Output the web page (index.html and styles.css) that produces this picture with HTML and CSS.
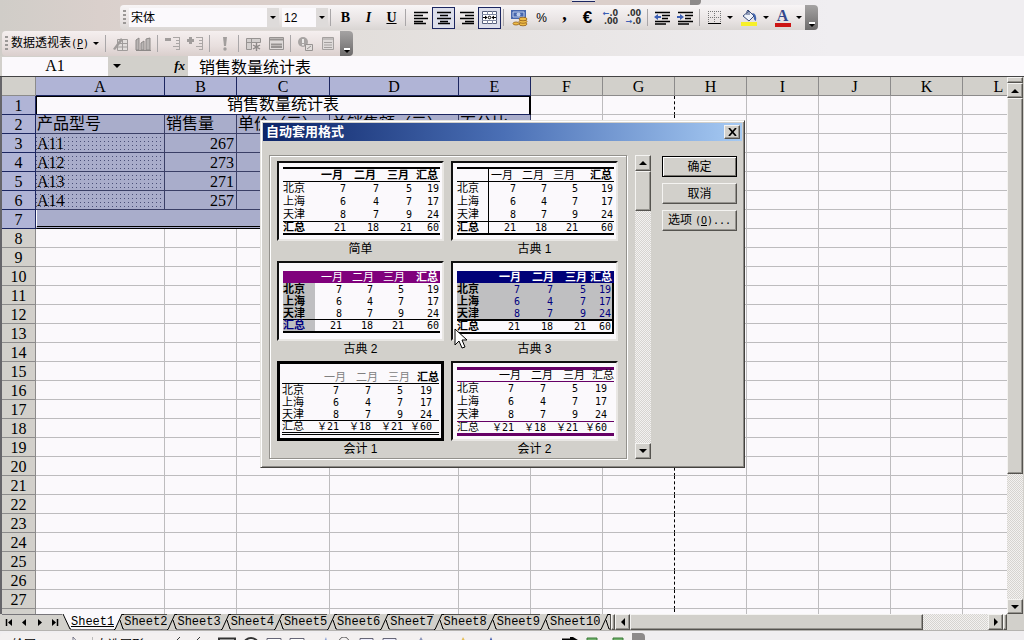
FILE: index.html
```html
<!doctype html>
<html lang="zh-CN">
<head>
  <meta charset="UTF-8">
  <meta name="viewport" content="width=device-width, initial-scale=1.0">
  <title>销售数量统计表</title>
  <link rel="stylesheet" href="styles.css">
</head>
<body>
  <header class="toolbars">
    <div class="bar-stub"><i></i></div>
    <div class="bar format-bar">
      <span class="grip"></span>
      <span class="combo font-combo"><select aria-label="字体"><option>宋体</option></select></span>
      <span class="combo size-combo"><select aria-label="字号"><option>12</option></select></span>
      <span class="sep"></span>
      <button class="tool serif" aria-label="加粗"><b>B</b></button>
      <button class="tool serif" aria-label="倾斜"><i>I</i></button>
      <button class="tool serif" aria-label="下划线"><u>U</u></button>
      <span class="sep"></span>
      <button class="tool" aria-label="左对齐"><svg width="16" height="14"><path d="M1 1.500h14M1 4.500h9M1 7.500h14M1 10.500h9M1 12.500h12" stroke="#000" stroke-width="1.400"/></svg></button>
      <button class="tool pressed" aria-label="居中"><svg width="16" height="14"><path d="M1 1.500h14M4 4.500h8M1 7.500h14M4 10.500h8M2 12.500h12" stroke="#000" stroke-width="1.400"/></svg></button>
      <button class="tool" aria-label="右对齐"><svg width="16" height="14"><path d="M1 1.500h14M6 4.500h9M1 7.500h14M6 10.500h9M3 12.500h12" stroke="#000" stroke-width="1.400"/></svg></button>
      <button class="tool pressed" aria-label="合并及居中"><svg width="17" height="15"><path d="M1.500 1.500h14v12h-14z" fill="#fff" stroke="#56607c"/><path d="M1 4.500h15M1 10.500h15M6.500 1v3M11.500 1v3M6.500 11v3M11.500 11v3" stroke="#8088a0"/><path d="M2 7.500h3M15 7.500h-3" stroke="#000"/><path d="M4 5.500l2.500 2-2.500 2zM13 5.500l-2.500 2 2.500 2z"/><circle cx="8.500" cy="7.500" r="1.300" fill="none" stroke="#000"/></svg></button>
      <span class="sep"></span>
      <button class="tool" aria-label="货币样式"><svg width="18" height="18"><rect x="1" y="1" width="15" height="9" fill="#4767ae"/><path d="M3 3h11v5H3z" fill="none" stroke="#bccbea"/><circle cx="8.500" cy="5.500" r="2" fill="#bccbea"/><g fill="#efbc46" stroke="#92601c" stroke-width=".8"><ellipse cx="13" cy="15" rx="4" ry="1.800"/><ellipse cx="13" cy="12.500" rx="4" ry="1.800"/><ellipse cx="13" cy="10" rx="4" ry="1.800"/><ellipse cx="6" cy="14.500" rx="3" ry="1.500"/></g></svg></button>
      <button class="tool" aria-label="百分比样式">%</button>
      <button class="tool serif" aria-label="千位分隔样式"><b class="comma">,</b></button>
      <button class="tool euro" aria-label="欧元">€</button>
      <button class="tool decimal" aria-label="增加小数位数"><span><em>←</em>.0<br>.00</span></button>
      <button class="tool decimal" aria-label="减少小数位数"><span>.00<br><em>→</em>.0</span></button>
      <span class="sep"></span>
      <button class="tool" aria-label="减少缩进量"><svg width="17" height="14"><path d="M1 1.500h15M8 4.500h8M8 7.500h6M1 10.500h15M1 13h11" stroke="#000" stroke-width="1.500"/><path d="M0 6l4-3v2h3v2H4v2z" fill="#3c5fb4"/></svg></button>
      <button class="tool" aria-label="增加缩进量"><svg width="17" height="14"><path d="M1 1.500h15M8 4.500h8M8 7.500h6M1 10.500h15M1 13h11" stroke="#000" stroke-width="1.500"/><path d="M7 6L3 3v2H0v2h3v2z" fill="#3c5fb4"/></svg></button>
      <span class="sep"></span>
      <button class="tool split" aria-label="边框"><svg width="15" height="15"><path d="M1.500 1v12M7.500 1v12M13.500 1v12M1 1.500h13M1 7.500h13" stroke="#777" stroke-dasharray="1 1"/><path d="M1 13.500h13" stroke="#000"/></svg><i class="down"></i></button>
      <button class="tool split" aria-label="填充颜色"><svg width="18" height="18"><rect x="1" y="13" width="16" height="4" fill="#f7f02a"/><path d="M3 7l6-5 5 5-5 5z" fill="#eef2fa" stroke="#3a4d7c"/><path d="M7 6V2q1-2 2 0v4" fill="none" stroke="#3a4d7c"/><path d="M12 4q5 0 4 8-3-1-2-5z" fill="#4165b0"/></svg><i class="down"></i></button>
      <button class="tool split font-color" aria-label="字体颜色"><span>A</span><i class="down"></i></button>
      <span class="bar-end"><i></i></span>
    </div>
    <div class="bar pivot-bar">
      <span class="grip"></span>
      <button class="pivot-menu"><span>数据透视表<span class="key">(<u>P</u>)</span></span><i class="down"></i></button>
      <span class="sep"></span>
      <button class="tool" aria-label="设置报告格式"><svg width="17" height="16"><path d="M5.500 3.500h10v11h-10zM5 7.500h11M5 11h11M10.500 4v10" fill="#e2dedc" stroke="#a09c9b"/><path d="M1 13L9 2l2 2-8 10z" fill="#a09c9b"/></svg></button>
      <button class="tool" aria-label="图表向导"><svg width="17" height="16"><path d="M1 4l3-2v12H1zM6 7l3-2v9H6zM11 3l4-1v12h-4z" fill="#b9b5b4" stroke="#8d8988"/><path d="M1 14.500h15" stroke="#8d8988"/></svg></button>
      <span class="sep"></span>
      <button class="tool" aria-label="隐藏明细数据"><svg width="17" height="16"><path d="M1 3.500h6" stroke="#a19d9c" stroke-width="3"/><path d="M9 1.500h7M12 4.500h4M12 7.500h4M9 10.500h7M12 13.500h4M15.500 1v13" stroke="#aaa6a5"/></svg></button>
      <button class="tool" aria-label="显示明细数据"><svg width="17" height="16"><path d="M0 4.500h7M3.500 1v7" stroke="#a19d9c" stroke-width="3"/><path d="M9 1.500h7M12 4.500h4M12 7.500h4M9 10.500h7M12 13.500h4M15.500 1v13" stroke="#aaa6a5"/></svg></button>
      <span class="sep"></span>
      <button class="tool" aria-label="刷新数据"><svg width="8" height="16"><path d="M2 1h4L5 10H3z" fill="#a29e9d"/><circle cx="4" cy="13" r="1.700" fill="#a29e9d"/></svg></button>
      <span class="sep"></span>
      <button class="tool" aria-label="包含隐藏项"><svg width="17" height="16"><path d="M1.500 2.500h14v4h-9v7h-5zM6.500 2v5M1 6.500h6" fill="#d3cfce" stroke="#979392"/><path d="M11.500 7v8M8 9l7 4M15 9l-7 4" stroke="#8d8988" stroke-width="1.400"/></svg></button>
      <button class="tool" aria-label="始终显示项"><svg width="17" height="16"><path d="M1.500 1.500h14v12h-14z" fill="#dedad9" stroke="#979392"/><path d="M1 3.500h15M3 8.500h11M3 11h11" stroke="#979392" stroke-width="2"/></svg></button>
      <span class="sep"></span>
      <button class="tool" aria-label="字段设置"><svg width="17" height="16"><circle cx="6" cy="6" r="5" fill="#a8a4a3"/><path d="M6 3v4M6 8v1.500" stroke="#fff" stroke-width="1.500"/><path d="M8.500 8.500h7v6h-7z" fill="#e2dedc" stroke="#979392"/><path d="M10 13l4-3" stroke="#979392"/></svg></button>
      <button class="tool" aria-label="显示字段列表"><svg width="15" height="15"><path d="M1.500 1.500h11v12h-11z" fill="#dedad9" stroke="#a4a09f"/><path d="M1 3h12M3 6.500h8M3 9h8M3 11.500h8" stroke="#a4a09f"/></svg></button>
      <span class="bar-end"><i></i></span>
    </div>
  </header>

  <div class="formula-bar">
    <input class="name-box" value="A1" aria-label="名称框">
    <button class="name-drop" aria-label="名称列表"><i class="down"></i></button>
    <span class="fx">fx</span>
    <input class="formula" value="销售数量统计表" aria-label="编辑栏">
  </div>

  <main class="workspace">
    <div class="sheet-view">
      <table class="sheet">
        <colgroup>
          <col class="c-head"><col class="c-wide"><col class="c"><col class="c-mid"><col class="c-wide"><col class="c">
          <col class="c"><col class="c"><col class="c"><col class="c"><col class="c"><col class="c"><col class="c">
        </colgroup>
        <thead>
          <tr>
            <th class="corner"></th><th class="on">A</th><th class="on">B</th><th class="on">C</th><th class="on">D</th><th class="on">E</th>
            <th>F</th><th>G</th><th>H</th><th>I</th><th>J</th><th>K</th><th>L</th>
          </tr>
        </thead>
        <tbody id="rows">
          <tr><th class="on">1</th><td class="title" colspan="5">销售数量统计表</td></tr>
          <tr><th class="on">2</th><td class="sel">产品型号</td><td class="sel">销售量</td><td class="sel">单价（元）</td><td class="sel">总销售额（元）</td><td class="sel">百分比</td></tr>
          <tr><th class="on">3</th><td class="sel dots">A11</td><td class="sel num">267</td><td class="sel"></td><td class="sel"></td><td class="sel"></td></tr>
          <tr><th class="on">4</th><td class="sel dots">A12</td><td class="sel num">273</td><td class="sel"></td><td class="sel"></td><td class="sel"></td></tr>
          <tr><th class="on">5</th><td class="sel dots">A13</td><td class="sel num">271</td><td class="sel"></td><td class="sel"></td><td class="sel"></td></tr>
          <tr><th class="on">6</th><td class="sel dots">A14</td><td class="sel num">257</td><td class="sel"></td><td class="sel"></td><td class="sel"></td></tr>
          <tr><th class="on">7</th><td class="sel last" colspan="5"></td></tr>
        </tbody>
      </table>
    </div>
    <div class="vscroll">
      <span class="splitter"></span>
      <button class="sb" aria-label="向上滚动"><i class="up"></i></button>
      <span class="thumb"></span>
      <span class="track"></span>
      <button class="sb" aria-label="向下滚动"><i class="down"></i></button>
    </div>
  </main>

  <nav class="sheet-tabs">
    <div class="tab-nav">
      <button aria-label="第一张"><svg width="9" height="9"><path d="M1.500 1v7" stroke="#000" stroke-width="1.500"/><path d="M7 1v7L3 4.500z"/></svg></button>
      <button aria-label="上一张"><svg width="9" height="9"><path d="M6 1v7L2 4.500z"/></svg></button>
      <button aria-label="下一张"><svg width="9" height="9"><path d="M3 1v7l4-3.500z"/></svg></button>
      <button aria-label="最后一张"><svg width="9" height="9"><path d="M2 1v7l4-3.500z"/><path d="M7.500 1v7" stroke="#000" stroke-width="1.500"/></svg></button>
    </div>
    <div class="tabs" id="tabs"></div>
    <div class="hscroll">
      <span class="splitter"></span>
      <button class="sb" aria-label="向左滚动"><i class="left"></i></button>
      <span class="thumb"></span>
      <span class="track"></span>
      <button class="sb" aria-label="向右滚动"><i class="right"></i></button>
      <span class="splitter"></span>
    </div>
    <span class="size-corner"></span>
  </nav>

  <footer class="draw-bar">
    <div class="draw-tools">
      <button class="draw-label">绘图</button>
      <svg width="30" height="16"><path d="M7 0l8 9H7z" fill="#fff" stroke="#778"/><path d="M26.500 0v16" stroke="#bbb"/></svg>
      <button class="draw-label">自选图形</button>
      <svg width="480" height="16">
        <path d="M26 10L36 0M46 10L56 0" stroke="#333"/>
        <path d="M75 1.500h16v10H75z" fill="#fff" stroke="#333" stroke-width="2"/>
        <ellipse cx="107" cy="7" rx="7" ry="6" fill="#fff" stroke="#333" stroke-width="2"/>
        <path d="M123 1.500h14v10h-14zM146 1.500h14v10h-14z" fill="#fff" stroke="#667"/>
        <path d="M177 12l5-12 3 12z" fill="#8aa0d4"/><circle cx="200" cy="5" r="5" fill="none" stroke="#555"/>
        <path d="M216 1.500h13v10h-13zM239 1.500h13v10h-13z" fill="#eef" stroke="#667"/>
        <path d="M272 9l5-9 5 9z" fill="#8a93b8"/><path d="M315 9l4-9 5 9z" fill="#e5bd56"/><path d="M343 10l4-10 4 10z" fill="#4760b0"/>
        <path d="M418 2.500h11M427 0l5 3-5 3z" stroke="#000" stroke-width="2"/>
        <path d="M443 1h10v9h-10zM469 1h10v9h-10z" fill="#72b26c" stroke="#3a7a38"/>
      </svg>
      <span class="bar-end"></span>
    </div>
  </footer>

  <section class="dialog" role="dialog" aria-labelledby="dlg-title">
    <div class="dialog-title">
      <h1 id="dlg-title">自动套用格式</h1>
      <button class="close" aria-label="关闭"><svg width="9" height="8"><path d="M1 0l7 8M8 0L1 8" stroke="#000" stroke-width="1.700"/></svg></button>
    </div>
    <div class="dialog-body">
      <div class="formats" id="formats" role="listbox" aria-label="格式"></div>
      <div class="vscroll dlg-scroll">
        <button class="sb" aria-label="向上滚动"><i class="up"></i></button>
        <span class="thumb"></span>
        <span class="track"></span>
        <button class="sb" aria-label="向下滚动"><i class="down"></i></button>
      </div>
      <div class="actions">
        <button class="btn default">确定</button>
        <button class="btn">取消</button>
        <button class="btn">选项<span class="key">(<u>O</u>)...</span></button>
      </div>
    </div>
    <svg class="pointer" width="14" height="22"><path d="M1 1v16l4-4 3 7 3-1-3-7h5z" fill="#fff" stroke="#000"/></svg>
  </section>

  <script src="script.js"></script>
</body>
</html>
```
FILE: styles.css
```css
:root {
  --face: #d2d0cb;
  --paper: #fbf9fc;
  --line: #bdbcbe;
  --head-on: #b0b4d6;
  --cell-on: #a9adcb;
  --navy: #1c2660;
  --ui: "Liberation Sans", "Noto Sans CJK SC", sans-serif;
  --song: "Liberation Serif", "Noto Sans CJK SC", serif;
}

* {
  margin: 0;
  padding: 0;
  box-sizing: border-box;
}

body {
  position: relative;
  display: flex;
  flex-direction: column;
  height: 100vh;
  overflow: hidden;
  background: #f0eef1;
  color: #000;
  font: 12px/16px var(--ui);
}

button, select, input {
  font: inherit;
  color: inherit;
  background: none;
  border: none;
  border-radius: 0;
}

svg {
  fill: #000;
  flex: none;
}

/* arrows */
.down, .up, .left, .right {
  flex: none;
  width: 0;
  height: 0;
  border: 4px solid transparent;
}
.down { border-top-color: #000; border-bottom-width: 0; }
.up { border-bottom-color: #000; border-top-width: 0; }
.left { border-right-color: #000; border-left-width: 0; }
.right { border-left-color: #000; border-right-width: 0; }
.split .down, .pivot-menu .down { border-width: 3px 3px 0; }

.key { font: 10px/16px "DejaVu Sans Mono", monospace; }

/* toolbars */
.toolbars {
  flex: none;
  background: linear-gradient(90deg, #d0cdc8 0, #dad0cc 100px, #e2dedb 350px, #f0eef1 830px);
}

.bar-stub {
  height: 5px;
  margin-left: 120px;
  width: 581px;
  background: #dbcfcb;
  border-right: 11px solid #8d8a8a;
  border-radius: 0 0 4px 0;
}
.bar-stub i {
  display: block;
  width: 23px;
  height: 2px;
  margin-left: 452px;
  background: #e6e6ee;
  border-bottom: 1px solid var(--navy);
}

.bar {
  display: flex;
  align-items: center;
  width: fit-content;
  background: linear-gradient(#f8f5f6, #e9e4e4 60%, #d9d5d3);
  border-radius: 4px;
}
.format-bar {
  height: 25px;
  margin-left: 120px;
}
.pivot-bar {
  height: 25px;
  margin: 1px 0 0 2px;
  background: linear-gradient(#f5efef, #e8dfde 60%, #dacfcd);
}

.grip {
  width: 3px;
  height: 16px;
  margin: 0 3px;
  background: repeating-linear-gradient(#9b9897 0 2px, transparent 2px 4px);
}

.sep {
  width: 1px;
  height: 17px;
  margin: 0 3px 0 2px;
  background: #a9a6a8;
}

.combo {
  display: flex;
  position: relative;
  height: 19px;
  background: var(--paper);
}
.combo select {
  appearance: none;
  width: 100%;
  padding-left: 2px;
  background: linear-gradient(#dedbda, #dedbda) right / 12px 100% no-repeat;
}
.combo::after {
  content: "";
  position: absolute;
  right: 3px;
  top: 8px;
  border: 3px solid transparent;
  border-top-color: #000;
  border-bottom-width: 0;
}
.font-combo { width: 150px; margin-right: 3px; }
.size-combo { width: 46px; }

.tool {
  display: flex;
  align-items: center;
  justify-content: center;
  width: 23px;
  height: 22px;
}
.tool.pressed {
  background: #dcdeea;
  border: 1px solid var(--navy);
}
.tool.split { width: 34px; gap: 5px; }
.serif { font: 14px/16px "Liberation Serif", serif; font-weight: bold; }
.comma { font-size: 18px; line-height: 12px; height: 20px; }
.euro { font-size: 17px; font-weight: bold; }
.decimal { font: bold 8px/8px "DejaVu Sans", sans-serif; text-align: right; color: #333; }
.decimal em { color: #3c5fb4; font-style: normal; }
.font-color span {
  height: 18px;
  width: 16px;
  border-bottom: 4px solid #cc1414;
  color: #34478c;
  font: bold 16px/14px "Liberation Serif", serif;
}

.bar-end {
  display: flex;
  align-items: flex-end;
  justify-content: center;
  width: 13px;
  align-self: stretch;
  background: linear-gradient(#a5a3a3, #6d6b6b);
  border-radius: 0 4px 4px 0;
}
.bar-end i {
  width: 6px;
  height: 3px;
  margin-bottom: 3px;
  border: 3px solid transparent;
  border-top-color: #000;
  border-bottom: 0;
  box-shadow: 0 -2px #fff;
}

.pivot-menu {
  display: flex;
  align-items: center;
  gap: 4px;
  width: 92px;
  white-space: nowrap;
}

/* formula bar */
.formula-bar {
  flex: none;
  display: flex;
  align-items: center;
  height: 20px;
  padding-left: 2px;
  background: var(--face);
  font: 16px/18px var(--song);
}
.name-box {
  width: 106px;
  height: 19px;
  background: var(--paper);
  text-align: center;
}
.name-drop { width: 17px; display: flex; justify-content: center; }
.fx {
  flex: none;
  width: 63px;
  padding-right: 3px;
  text-align: right;
  font: italic bold 13px/18px "Liberation Serif", serif;
}
.formula {
  flex: 1;
  min-width: 0;
  height: 20px;
  padding-left: 11px;
  background: var(--paper);
}

/* sheet */
.workspace {
  flex: 1;
  min-height: 0;
  display: flex;
  background: var(--face);
  border-top: 1px solid #444;
}
.sheet-view {
  flex: 1;
  min-width: 0;
  overflow: hidden;
  border-left: 2px solid #66656a;
  background: var(--paper);
}
.sheet {
  table-layout: fixed;
  width: 1000px;
  border-spacing: 0;
  font: 16px/18px var(--song);
}
.c-head { width: 34px; }
.c-wide { width: 129px; }
.c-mid { width: 93px; }
.c { width: 72px; }

.sheet th, .sheet td {
  height: 19px;
  border-right: 1px solid var(--line);
  border-bottom: 1px solid var(--line);
  white-space: nowrap;
  overflow: hidden;
}
.sheet th {
  background: var(--face);
  border-color: #8c8b8b;
  font-weight: normal;
}
.sheet th, .sheet td.dots, .sheet td.num {
  padding-top: 2px;
  line-height: 16px;
}
.sheet th.on {
  background: var(--head-on);
  border-color: var(--navy);
}
.sheet td { padding-left: 1px; }
.sheet td.title {
  text-align: center;
  border-right: 2px solid #000;
  border-bottom-color: var(--navy);
  box-shadow: inset 1px 1px #000;
}
.sheet td.sel {
  background-color: var(--cell-on);
  border-color: #3a3f66;
}
.sheet td.dots {
  background-image:
    repeating-linear-gradient(var(--cell-on) 0 3px, transparent 3px 4px),
    repeating-linear-gradient(90deg, #4a4f78 0 1px, var(--cell-on) 1px 4px);
}
.sheet td.num { padding-right: 2px; text-align: right; }
.sheet td.last {
  border-bottom: 3px double #000;
  border-left: 1px solid #fff;
}
.sheet td.page-break { border-right: 1px dashed #000; }

/* scroll bars */
.vscroll {
  display: flex;
  flex-direction: column;
  width: 17px;
  padding-right: 1px;
}
.sb, .thumb, .splitter, .btn, .close {
  background: var(--face);
  border: 1px solid;
  border-color: #f4f3f1 #55534f #55534f #f4f3f1;
  box-shadow: inset -1px -1px #96948f;
}
.sb {
  flex: none;
  display: flex;
  align-items: center;
  justify-content: center;
  height: 15px;
}
.vscroll .splitter { height: 6px; }
.vscroll .thumb { flex: 376; }
.vscroll .track { flex: 126; }
.track {
  background: repeating-conic-gradient(#d6d4d0 0 25%, #f3f1f0 0 50%) 0 0 / 2px 2px;
}

/* tab strip */
.sheet-tabs {
  flex: none;
  display: flex;
  height: 16px;
  padding-left: 2px;
  background: var(--face);
}
.tab-nav {
  flex: none;
  display: flex;
  width: 60px;
  border-top: 1px solid #77757a;
}
.tab-nav button {
  flex: 1;
  display: flex;
  align-items: center;
  justify-content: center;
}
.tabs {
  flex: none;
  display: flex;
  width: 549px;
  overflow: hidden;
  font: 12px/14px "Liberation Mono", monospace;
  border-right: 1px solid #55534f;
}
.tab {
  color: inherit;
  text-decoration: none;
  border-top: 1px solid #55534f;
  border-bottom: 1px solid #77757a;
}
.tab.active {
  background: var(--paper);
  border-top-color: var(--paper);
  text-decoration: underline;
}
.hscroll {
  flex: 1;
  display: flex;
}
.hscroll .sb { width: 15px; height: 16px; }
.hscroll .thumb { flex: 294; }
.hscroll .track { flex: 66; }
.hscroll .splitter { width: 4px; }
.size-corner { width: 17px; }

/* drawing toolbar, mostly below the window edge */
.draw-bar {
  flex: none;
  height: 10px;
  overflow: hidden;
  background: #f0eef0;
  border-top: 1px solid #b5b3b0;
}
.draw-tools {
  display: flex;
  height: 24px;
  width: 645px;
  margin-top: 2px;
  padding-left: 12px;
  background: #f3f0f0;
  border-radius: 4px;
}
.draw-tools svg, .draw-label { margin-top: 4px; }
.draw-label { height: 16px; flex: none; padding-right: 30px; }
.draw-label + svg + .draw-label { padding: 0; }
.draw-tools .bar-end { margin-left: auto; background: #8d8a8a; }

/* dialog */
.dialog {
  position: absolute;
  left: 260px;
  top: 120px;
  padding: 2px;
  background: var(--face);
  border: 1px solid;
  border-color: #e6e4e0 #44423f #44423f #e6e4e0;
  box-shadow: inset 1px 1px #fff, inset -1px -1px #8c8a86;
}
.dialog-title {
  display: flex;
  align-items: center;
  justify-content: space-between;
  height: 18px;
  padding: 0 2px 0 3px;
  background: linear-gradient(90deg, #0d2568, #4a6fb5 50%, #a6caf3);
  color: #fff;
}
.dialog-title h1 { font: bold 13px/18px var(--ui); }
.close {
  display: flex;
  align-items: center;
  justify-content: center;
  width: 16px;
  height: 14px;
}
.dialog-body {
  display: flex;
  padding: 14px 5px 6px 6px;
}

.formats {
  display: grid;
  grid-template-columns: 167px 167px;
  column-gap: 7px;
  width: 358px;
  height: 304px;
  padding: 5px 7px 0;
  border: 1px solid #93918c;
  box-shadow: inset 1px 1px #fff, 1px 1px #fff;
}
.format { height: 100px; }
.preview {
  height: 80px;
  padding: 4px;
  background: var(--paper);
  border: 2px solid;
  border-color: #111 #e9e7e4 #e9e7e4 #111;
}
.format.selected .preview { border: 3px solid #000; padding: 3px 2px; }
.format p { height: 16px; line-height: 16px; text-align: center; }

.preview table {
  table-layout: fixed;
  width: 157px;
  border-spacing: 0;
  font: 10px/11px "DejaVu Sans Mono", "Noto Sans CJK SC", monospace;
}
.preview th, .preview td {
  height: 13px;
  text-align: right;
  font-weight: normal;
  white-space: nowrap;
}
.preview th { font-size: 11px; }
.preview tbody th, .preview tfoot th { text-align: left; }
.preview td { padding-right: 1px; }
.preview tfoot th, .preview tfoot td { height: 12px; }
.preview thead th:last-child { font-weight: bold; padding-right: 2px; }

/* city column and the three months; the total takes what is left */
.preview col:nth-child(1), .preview col:nth-child(2) { width: 32px; }
.preview col:nth-child(3), .preview col:nth-child(4) { width: 33px; }

.simple thead th, .classic1 thead th {
  height: 15px;
  border-top: 2px solid #000;
  border-bottom: 1px solid #000;
  padding-right: 4px;
}
.simple thead th { font-weight: bold; }
.simple tfoot > tr > *, .classic1 tfoot > tr > * {
  height: 14px;
  border-top: 1px solid #000;
  border-bottom: 2px solid #000;
}
.simple tfoot th, .classic1 tfoot th, .classic2 th:first-child, .classic3 th:first-child { font-weight: bold; }

.classic1 tr > :first-child { border-right: 1px solid #000; }
.preview .classic1 col:nth-child(2), .preview .classic2 col:nth-child(2) { width: 28px; }
.preview .classic1 col:nth-child(3), .preview .classic1 col:nth-child(4),
.preview .classic2 col:nth-child(3), .preview .classic2 col:nth-child(4) { width: 31px; }

.preview .classic2, .preview .classic3 { margin-top: 4px; }
.classic2 tbody > tr > *, .classic3 tbody > tr > *,
.preview .classic2 thead th, .preview .classic3 thead th { height: 12px; }
.classic2 thead th { background: #80007c; color: #fff; }
.classic2 tbody th, .classic2 tfoot th { background: #bfbfc1; }
.classic2 tfoot th { color: #000080; }
.classic2 tfoot > tr > * {
  border-top: 1px solid #000;
  border-bottom: 2px solid #000;
}

.classic3 thead th { background: #000078; color: #fff; font-weight: bold; }
.classic3 tbody { background: #bfbfc1; }
.classic3 tbody td { color: #000080; }
.classic3 tr > :last-child { border-right: 2px solid #000; }
.preview .classic3 thead th:last-child { padding-right: 0; border-color: #000078; }
.classic3 tfoot > tr > * {
  border-top: 2px solid #000;
  border-bottom: 2px solid #000;
}

.preview .account1 td, .preview .account2 td { padding-right: 7px; }
.preview .account1 col, .preview .account2 col { width: 32px; }
.preview .account1 col:last-child, .preview .account2 col:last-child { width: 29px; }
.preview .account1 thead th:last-child, .preview .account2 thead th:last-child { padding-right: 0; }
.account1 thead th { height: 17px; border-bottom: 1px solid #000; color: #808080; vertical-align: bottom; }
.account1 thead th:last-child { color: #000; }
.account1 tbody > tr > * { height: 12px; }
.account1 tfoot > tr > * {
  height: 15px;
  border-top: 1px solid #000;
  border-bottom: 3px double #000;
}

.account2 thead th { height: 15px; border-top: 3px solid #660066; border-bottom: 1px solid #660066; }
.preview .account2 thead th:last-child { font-weight: normal; }
.account2 tfoot > tr > * {
  height: 15px;
  border-top: 1px solid #660066;
  border-bottom: 3px solid #660066;
}

.dlg-scroll { margin-left: 8px; height: 304px; }
.dlg-scroll .sb { height: 16px; }
.vscroll.dlg-scroll .thumb { flex: 38; }
.vscroll.dlg-scroll .track { flex: 234; }

.actions {
  display: flex;
  flex-direction: column;
  gap: 6px;
  margin-left: 10px;
  padding-top: 1px;
  width: 75px;
}
.btn { height: 21px; white-space: nowrap; }
.btn.default { border-color: #000; box-shadow: inset 1px 1px #fff, inset -1px -1px #77756f; }
.btn .key { margin-left: 3px; }

.pointer {
  position: absolute;
  left: 193px;
  top: 207px;
}
```
FILE: script.js
```js
const COLUMNS = 12;
const ROWS = 28;
const PAGE_BREAK = 7; // column G

const rows = document.getElementById('rows');
for (let r = 1; r <= ROWS; r++) {
  let tr = rows.rows[r - 1];
  if (!tr) {
    tr = rows.insertRow();
    const th = document.createElement('th');
    // the last row is only a sliver above the tabs
    th.textContent = r < ROWS ? r : '';
    tr.appendChild(th);
  }
  let used = -1;
  for (const cell of tr.cells) used += cell.colSpan;
  while (used < COLUMNS) {
    used++;
    const td = tr.insertCell();
    if (used === PAGE_BREAK) td.className = 'page-break';
  }
}

// sheet tabs, each followed by its slanted edge
const tabs = document.getElementById('tabs');
let html = '<svg width="9" height="16"><path d="M0 0h9v15z" fill="#fbf9fc"/><path d="M1 0l7 15h1" fill="none" stroke="#000"/></svg>';
for (let i = 1; i <= 10; i++) {
  const left = i === 1 ? '#fbf9fc' : '#d2d0cb';
  html += `<a class="tab${i === 1 ? ' active' : ''}" href="#sheet${i}">Sheet${i}</a>`;
  html += `<svg width="10" height="16"><path d="M0 0h8L1 15H0z" fill="${left}"/><path d="M8 .5h2M0 15.500h1L8 0M6 6l3 9h1" fill="none" stroke="#000"/></svg>`;
}
tabs.innerHTML = html;

// format previews
const formats = [
  { name: '简单', style: 'simple' },
  { name: '古典 1', style: 'classic1' },
  { name: '古典 2', style: 'classic2' },
  { name: '古典 3', style: 'classic3' },
  { name: '会计 1', style: 'account1', money: '￥', selected: true },
  { name: '会计 2', style: 'account2', money: '￥' }
];
const data = [['北京', 7, 7, 5, 19], ['上海', 6, 4, 7, 17], ['天津', 8, 7, 9, 24]];
const totals = [21, 18, 21, 60];

document.getElementById('formats').innerHTML = formats.map(f => `
  <div class="format${f.selected ? ' selected' : ''}" role="option" aria-selected="${!!f.selected}">
    <div class="preview">
      <table class="${f.style}">
        <colgroup><col><col><col><col><col></colgroup>
        <thead><tr><th></th><th>一月</th><th>二月</th><th>三月</th><th>汇总</th></tr></thead>
        <tbody>${data.map(([city, ...n]) => `<tr><th>${city}</th>${n.map(v => `<td>${v}</td>`).join('')}</tr>`).join('')}</tbody>
        <tfoot><tr><th>汇总</th>${totals.map(v => `<td>${f.money || ''}${v}</td>`).join('')}</tr></tfoot>
      </table>
    </div>
    <p>${f.name}</p>
  </div>`).join('');
```
